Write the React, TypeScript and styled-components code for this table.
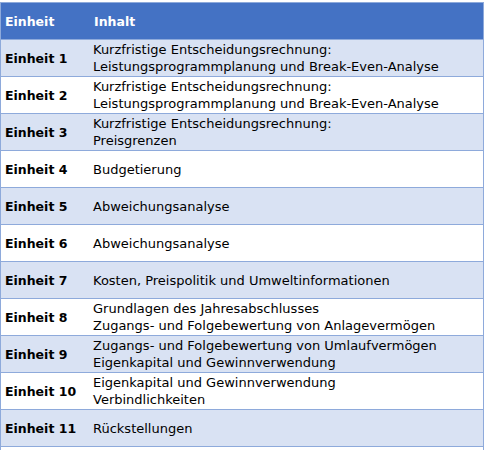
import React from "react";
import styled, { createGlobalStyle } from "styled-components";

const GlobalStyle = createGlobalStyle`
  body {
    margin: 0;
    padding-top: 2px;
    background: #ffffff;
    font-family: "DejaVu Sans", Verdana, sans-serif;
  }
`;

const Table = styled.table`
  width: 484px;
  border-collapse: collapse;
  border: 1px solid #8eaadb;
  font-size: 13px;
  color: #000000;
`;

const HeadCell = styled.th<{ $first?: boolean }>`
  background: #4472c4;
  color: #ffffff;
  font-weight: bold;
  font-size: 12.5px;
  text-align: left;
  height: 36px;
  padding: 0 0 0 ${(p) => (p.$first ? "4px" : "5px")};
  border-bottom: 1px solid #8eaadb;
`;

const Row = styled.tr<{ $shaded: boolean }>`
  background: ${(p) => (p.$shaded ? "#d9e2f3" : "#ffffff")};
  border-bottom: 1px solid #8eaadb;
`;

const UnitCell = styled.td`
  width: 84px;
  height: 36px;
  padding: 0 0 0 4px;
  font-weight: bold;
  font-size: 12.5px;
  vertical-align: middle;
`;

const ContentCell = styled.td`
  padding: 0 0 0 4px;
  line-height: 17px;
  vertical-align: middle;
`;

const rows: { unit: string; lines: string[] }[] = [
  { unit: "Einheit 1", lines: ["Kurzfristige Entscheidungsrechnung:", "Leistungsprogrammplanung und Break-Even-Analyse"] },
  { unit: "Einheit 2", lines: ["Kurzfristige Entscheidungsrechnung:", "Leistungsprogrammplanung und Break-Even-Analyse"] },
  { unit: "Einheit 3", lines: ["Kurzfristige Entscheidungsrechnung:", "Preisgrenzen"] },
  { unit: "Einheit 4", lines: ["Budgetierung"] },
  { unit: "Einheit 5", lines: ["Abweichungsanalyse"] },
  { unit: "Einheit 6", lines: ["Abweichungsanalyse"] },
  { unit: "Einheit 7", lines: ["Kosten, Preispolitik und Umweltinformationen"] },
  { unit: "Einheit 8", lines: ["Grundlagen des Jahresabschlusses", "Zugangs- und Folgebewertung von Anlagevermögen"] },
  { unit: "Einheit 9", lines: ["Zugangs- und Folgebewertung von Umlaufvermögen", "Eigenkapital und Gewinnverwendung"] },
  { unit: "Einheit 10", lines: ["Eigenkapital und Gewinnverwendung", "Verbindlichkeiten"] },
  { unit: "Einheit 11", lines: ["Rückstellungen"] },
  { unit: "", lines: [] },
];

const App: React.FC = () => {
  return (
    <>
      <GlobalStyle />
      <Table>
        <thead>
          <tr>
            <HeadCell $first>Einheit</HeadCell>
            <HeadCell>Inhalt</HeadCell>
          </tr>
        </thead>
        <tbody>
          {rows.map((r, i) => (
            <Row key={i} $shaded={i % 2 === 0}>
              <UnitCell>{r.unit}</UnitCell>
              <ContentCell>
                {r.lines.map((l, j) => (
                  <React.Fragment key={j}>
                    {j > 0 && <br />}
                    {l}
                  </React.Fragment>
                ))}
              </ContentCell>
            </Row>
          ))}
        </tbody>
      </Table>
    </>
  );
};

export default App;
